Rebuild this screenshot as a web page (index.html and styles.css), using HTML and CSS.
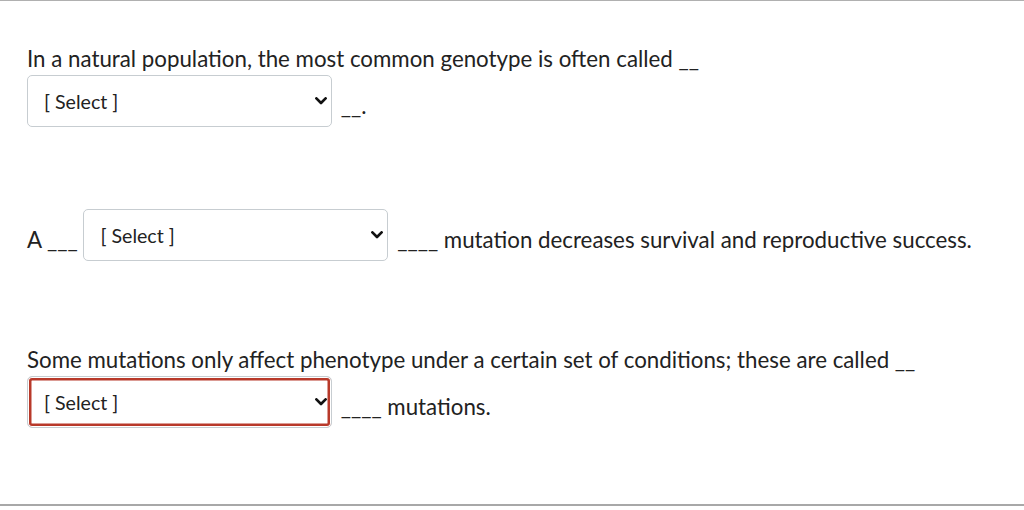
FILE: index.html
```html
<!DOCTYPE html>
<html>
<head>
<meta charset="utf-8">
<link rel="stylesheet" href="styles.css">
</head>
<body>
<div class="page">
  <div class="question">
    In a natural population, the most common genotype is often called __ <span class="dd-wrap"><select class="dd"><option>[ Select ]</option></select><svg class="chev" width="12" height="8" viewBox="0 0 12 8"><path d="M1.4 1.4 L6 6 L10.6 1.4" fill="none" stroke="#111" stroke-width="2.7" stroke-linecap="round" stroke-linejoin="round"/></svg></span> __.
  </div>
  <div class="question">
    A ___ <span class="dd-wrap"><select class="dd"><option>[ Select ]</option></select><svg class="chev" width="12" height="8" viewBox="0 0 12 8"><path d="M1.4 1.4 L6 6 L10.6 1.4" fill="none" stroke="#111" stroke-width="2.7" stroke-linecap="round" stroke-linejoin="round"/></svg></span> ____ mutation decreases survival and reproductive success.
  </div>
  <div class="question">
    Some mutations only affect phenotype under a certain set of conditions; these are called __ <span class="dd-wrap"><select class="dd dd-error"><option>[ Select ]</option></select><svg class="chev" width="12" height="8" viewBox="0 0 12 8"><path d="M1.4 1.4 L6 6 L10.6 1.4" fill="none" stroke="#111" stroke-width="2.7" stroke-linecap="round" stroke-linejoin="round"/></svg></span> ____ mutations.
  </div>
</div>
</body>
</html>
```
FILE: styles.css
```css
html, body {
  margin: 0;
  padding: 0;
  background: #fff;
}
body {
  font-family: "Lato", "Liberation Sans", sans-serif;
  font-size: 22.3px;
  line-height: 33px;
  color: #222;
}
.page {
  border-top: 1px solid #b0b0b0;
  border-bottom: 2px solid #a8a8a8;
  height: 506px;
  box-sizing: border-box;
  padding: 41px 40px 0 27px;
  width: 1024px;
}
.question {
  margin-bottom: 82px;
}
.dd-wrap {
  position: relative;
  display: inline-block;
  vertical-align: 5px;
  margin-right: 3px;
}
.dd {
  display: block;
  -webkit-appearance: none;
  appearance: none;
  font-family: "Lato", "Liberation Sans", sans-serif;
  font-size: 19.6px;
  color: #222;
  width: 305px;
  height: 52px;
  padding: 0 30px 0 16px;
  margin: 0;
  border: 1px solid #c7cdd1;
  border-radius: 5px;
  background: #fff;
  box-sizing: border-box;
}
.dd-error {
  box-shadow: inset 0 0 0 1px #fff, inset 0 0 0 3.5px #b8392a;
}
.chev {
  position: absolute;
  right: 5px;
  top: 22px;
  pointer-events: none;
}
```
